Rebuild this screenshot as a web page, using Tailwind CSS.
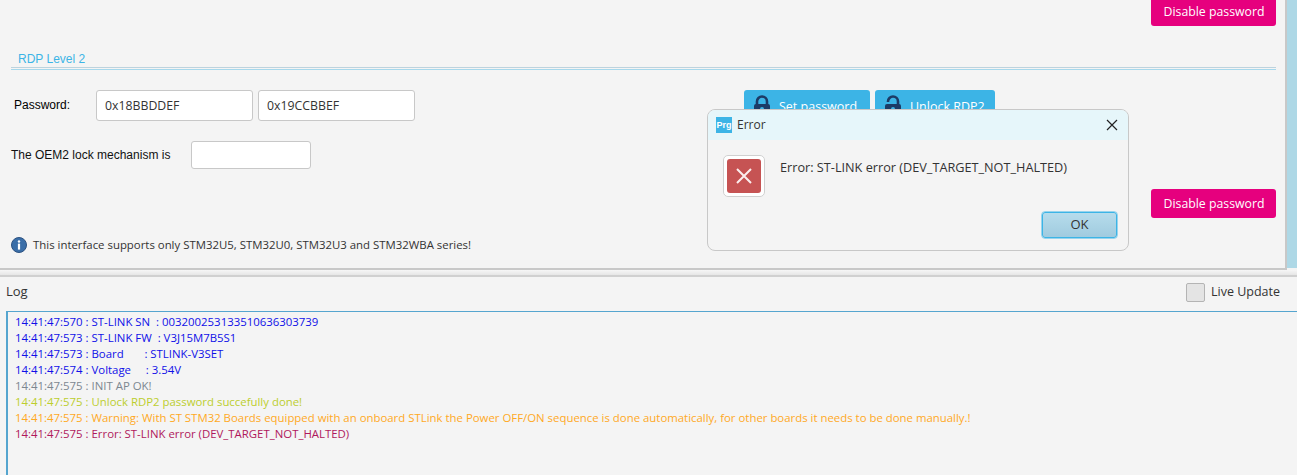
<!DOCTYPE html>
<html lang="en">
<head>
    <meta charset="UTF-8">
    <title>RDP Level 2</title>
    <script src="https://cdn.jsdelivr.net/npm/@tailwindcss/browser@4"></script>
</head>
<body class="bg-[#f4f4f4] h-[475px] overflow-hidden font-['Open_Sans',sans-serif]">
    <div class="relative h-[475px] flex flex-col overflow-hidden">
        <!-- Top panel -->
        <div class="flex h-[270px] shrink-0">
            <div class="flex-1 border-r-2 border-b-2 border-[#c8c8c8] pl-[11px] pr-[9px]">
                <div class="flex justify-end h-[26px]">
                    <button class="w-[125px] h-[26px] pl-[1px] pb-[1px] bg-[#e6007e] text-white text-[12.3px] rounded-b-[3px]">Disable password</button>
                </div>
                <div class="mt-[25px] pl-[7px] h-[16px] text-[12px] leading-[16px] text-[#3cb4e6] font-['Liberation_Sans',sans-serif]">RDP Level 2</div>
                <div class="h-[3px] border-t border-b border-t-[#bcd3de] border-b-[#a6d8ec]"></div>
                <div class="flex justify-between h-[148px]">
                    <div class="flex flex-col">
                        <div class="flex items-start mt-[20px]">
                            <span class="w-[85px] pl-[3px] pt-[8px] text-[12px] leading-[14px] text-black font-['Liberation_Sans',sans-serif]">Password:</span>
                            <input value="0x18BBDDEF" class="w-[157px] h-[31px] px-[8px] bg-white border border-[#c8c8c8] rounded-[3px] text-[12.3px] text-[#333]">
                            <input value="0x19CCBBEF" class="ml-[5px] w-[157px] h-[31px] px-[8px] bg-white border border-[#c8c8c8] rounded-[3px] text-[12.3px] text-[#333]">
                        </div>
                        <div class="flex items-start mt-[20px]">
                            <span class="w-[180px] pt-[7px] text-[12px] leading-[14px] text-[#111] font-['Liberation_Sans',sans-serif]">The OEM2 lock mechanism is</span>
                            <input class="w-[120px] h-[28px] bg-white border border-[#c8c8c8] rounded-[3px]">
                        </div>
                    </div>
                    <div class="flex items-end">
                        <button class="w-[125px] h-[29px] pl-[1px] pt-[1px] bg-[#e6007e] text-white text-[12.3px] rounded-[3px]">Disable password</button>
                    </div>
                </div>
                <div class="mt-[18px] flex items-center gap-[6px] text-[11.4px] text-[#333]">
                    <svg width="16" height="16" viewBox="0 0 16 16">
                        <circle cx="8" cy="8" r="7.5" fill="#3a6ea8" stroke="#2c5282"/>
                        <circle cx="8" cy="4.5" r="1.2" fill="#fff"/>
                        <rect x="6.9" y="6.6" width="2.2" height="6" fill="#fff"/>
                    </svg>
                    <span>This interface supports only STM32U5, STM32U0, STM32U3 and STM32WBA series!</span>
                </div>
            </div>
            <div class="w-[10px] h-[268px] bg-[#aed8e6]"></div>
        </div>
        <!-- Splitter -->
        <div class="h-[7px] shrink-0 border-b-2 border-[#d0d0d0] bg-linear-to-b from-[#f6f6f6] to-[#e6e6e6]"></div>
        <!-- Log -->
        <div class="flex-1 flex flex-col min-h-0">
            <div class="h-[34px] shrink-0 flex items-center justify-between pl-[6px] pr-[17px] pb-[3px] text-[#333]">
                <span class="text-[13px] mb-[1px]">Log</span>
                <div class="flex items-center gap-[6px] text-[12.5px]">
                    <span class="w-[19px] h-[19px] rounded-[2px] border border-[#b4b4b4] bg-[#e4e4e4]"></span>
                    <span>Live Update</span>
                </div>
            </div>
            <div class="flex-1 ml-[6px] border-t border-l-2 border-[#55a5cf] pl-[7px] pt-[2px] text-[11.4px] leading-[16px]">
                <div class="whitespace-pre text-[#1010e8]">14:41:47:570 : ST-LINK SN  : 003200253133510636303739</div>
                <div class="whitespace-pre text-[#1010e8]">14:41:47:573 : ST-LINK FW  : V3J15M7B5S1</div>
                <div class="whitespace-pre text-[#1010e8]">14:41:47:573 : Board       : STLINK-V3SET</div>
                <div class="whitespace-pre text-[#1010e8]">14:41:47:574 : Voltage     : 3.54V</div>
                <div class="whitespace-pre text-[#7c8790]">14:41:47:575 : INIT AP OK!</div>
                <div class="whitespace-pre text-[#bcce2e]">14:41:47:575 : Unlock RDP2 password succefully done!</div>
                <div class="whitespace-pre text-[#ffa91f]">14:41:47:575 : Warning: With ST STM32 Boards equipped with an onboard STLink the Power OFF/ON sequence is done automatically, for other boards it needs to be done manually.!</div>
                <div class="whitespace-pre text-[#b0185c]">14:41:47:575 : Error: ST-LINK error (DEV_TARGET_NOT_HALTED)</div>
            </div>
        </div>

        <!-- Buttons behind the dialog -->
        <div class="absolute left-[744px] top-[90px] flex gap-[5px]">
            <button class="w-[126px] h-[30px] bg-[#3cb4e6] rounded-[3px] text-white text-[12.5px] flex items-start gap-[8px] pl-[9px] pt-[5px]">
                <svg width="18" height="22" viewBox="0 0 18 22"><path d="M4 10V6.5a5 5 0 0 1 10 0V10" fill="none" stroke="#1d3b66" stroke-width="2.6"/><rect x="1" y="9" width="16" height="13" rx="2" fill="#1d3b66"/><circle cx="9" cy="14" r="2" fill="#3cb4e6"/></svg>
                <span class="mt-[3px]">Set password</span>
            </button>
            <button class="w-[120px] h-[30px] bg-[#3cb4e6] rounded-[3px] text-white text-[12.5px] flex items-start gap-[8px] pl-[9px] pt-[5px]">
                <svg width="18" height="22" viewBox="0 0 18 22"><path d="M4 7V6.5a5 5 0 0 1 10 0V10" fill="none" stroke="#1d3b66" stroke-width="2.6"/><rect x="1" y="9" width="16" height="13" rx="2" fill="#1d3b66"/><circle cx="9" cy="14" r="2" fill="#3cb4e6"/></svg>
                <span class="mt-[3px]">Unlock RDP2</span>
            </button>
        </div>

        <!-- Error dialog -->
        <div class="absolute left-[707px] top-[109px] w-[422px] h-[142px] bg-[#f4f4f4] border border-[#c8c8c8] rounded-[8px] overflow-hidden">
            <div class="h-[30px] bg-[#e6f6fa] flex items-center pl-[8px] pr-[10px] text-[12px] text-[#333]">
                <span class="w-[16px] h-[16px] bg-[#3cb4e6] text-white text-[9px] font-bold leading-[16px] text-center font-['Liberation_Sans',sans-serif]">Prg</span>
                <span class="ml-[5px]">Error</span>
                <svg class="ml-auto" width="12" height="12" viewBox="0 0 12 12"><path d="M1 1l10 10M11 1L1 11" stroke="#222" stroke-width="1.2"/></svg>
            </div>
            <div class="flex pl-[15px] pt-[15px]">
                <div class="w-[42px] h-[42px] p-[3px] bg-white border border-[#d0d0d0] rounded-[5px]">
                    <div class="w-full h-full rounded-[3px] bg-[#c65353] flex items-center justify-center">
                        <svg width="18" height="18" viewBox="0 0 18 18"><path d="M2 2l14 14M16 2L2 16" stroke="#fbeeee" stroke-width="2"/></svg>
                    </div>
                </div>
                <span class="ml-[15px] pt-[4px] text-[12.7px] leading-[16px] text-[#333]">Error: ST-LINK error (DEV_TARGET_NOT_HALTED)</span>
            </div>
            <div class="flex justify-end pr-[11px] mt-[15px]">
                <button class="w-[75px] h-[26px] rounded-[3px] border border-[#3cb4e6] outline outline-[#3cb4e6]/50 bg-linear-to-b from-[#b6dcec] to-[#a0cbdf] text-[13px] text-[#333]">OK</button>
            </div>
        </div>
    </div>
</body>
</html>
